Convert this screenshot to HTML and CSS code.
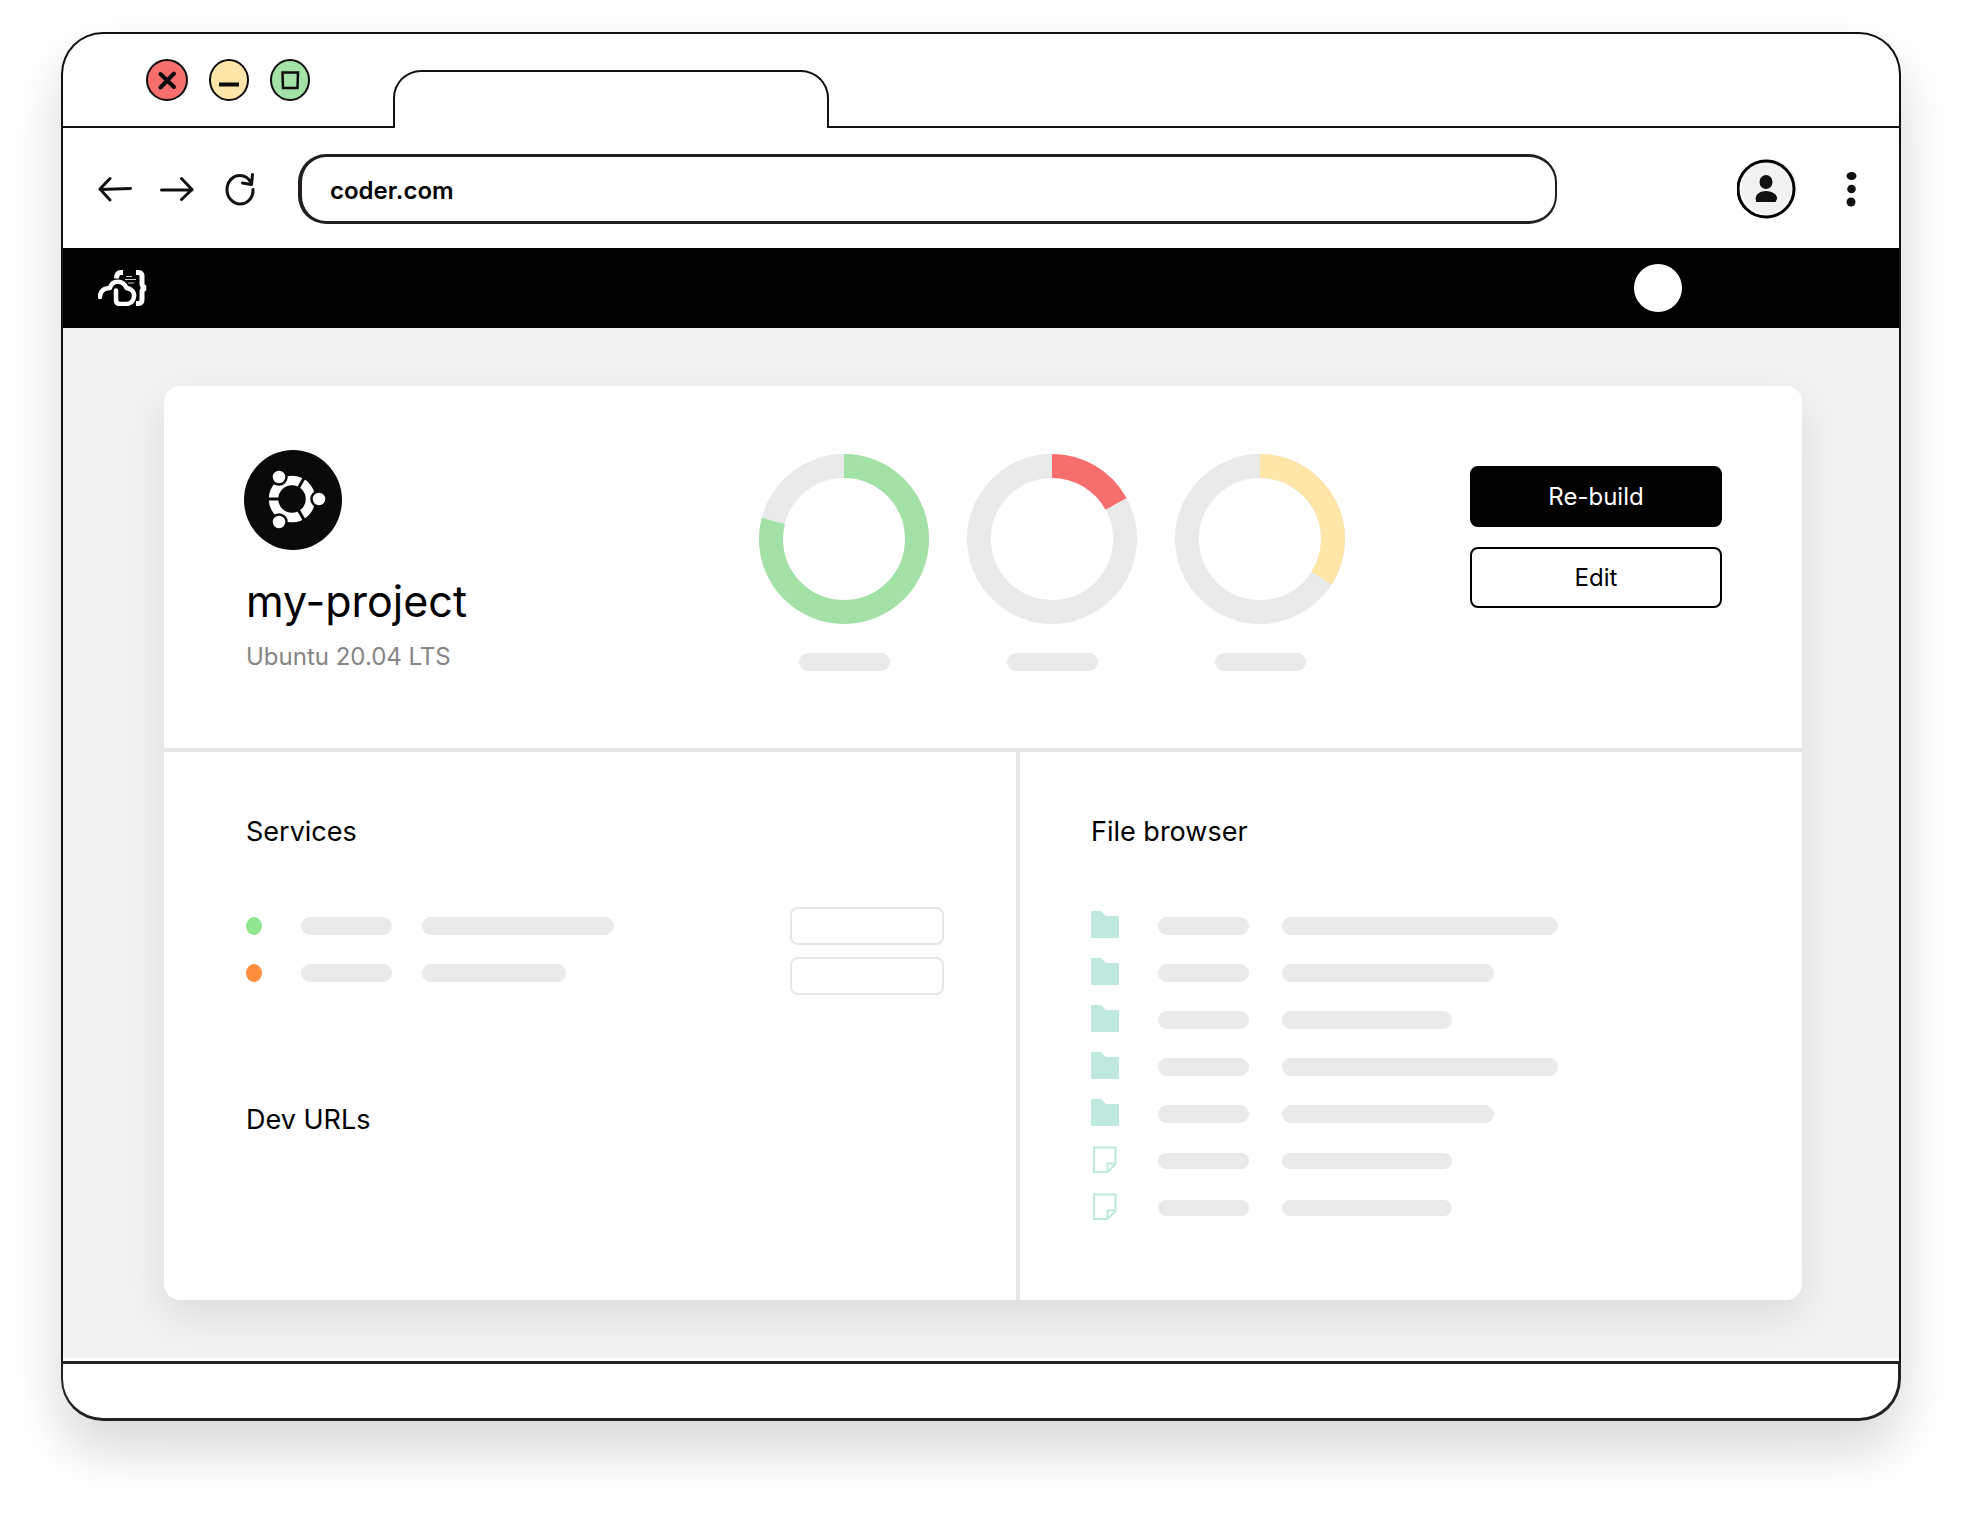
FILE: index.html
```html
<!DOCTYPE html>
<html lang="en">
<head>
  <meta charset="UTF-8" />
  <meta name="viewport" content="width=device-width, initial-scale=1.0" />
  <title>my-project</title>
  <link rel="stylesheet" href="styles.css">
</head>
<body>
  <!-- icons used more than once -->
  <svg class="sprite" aria-hidden="true">
    <symbol id="folder" viewBox="0 0 28 27">
      <path d="M1 0h9l5 5h12q1 0 1 1v20q0 1-1 1H1q-1 0-1-1V1q0-1 1-1z" fill="#bfe8df"/>
    </symbol>
    <symbol id="file" viewBox="0 0 28 27">
      <path d="M3 1.500h21.500v16.500l-8 8H3zM16.500 26v-8.500h8" fill="none" stroke="#bfe8df" stroke-width="2"/>
    </symbol>
  </svg>

  <div class="window">
    <div class="frame">
      <div class="titlebar">
        <div class="controls">
          <button class="control" aria-label="Close">
            <svg width="42" height="42" viewBox="0 0 42 42">
              <ellipse cx="21" cy="21" rx="20" ry="20" fill="#f66e6e" stroke="#0d0d0d" stroke-width="2"/>
              <path d="M14.500 15l13.500 13M28 14.500L14.500 28.500" stroke="#0d0d0d" stroke-width="4" stroke-linecap="round"/>
            </svg>
          </button>
          <button class="control" aria-label="Minimize">
            <svg width="40" height="42" viewBox="0 0 40 42">
              <ellipse cx="20" cy="21" rx="19" ry="20" fill="#ffe5a8" stroke="#0d0d0d" stroke-width="2"/>
              <path d="M10 25.500h20" stroke="#0d0d0d" stroke-width="4"/>
            </svg>
          </button>
          <button class="control" aria-label="Maximize">
            <svg width="40" height="42" viewBox="0 0 40 42">
              <ellipse cx="20" cy="21" rx="19" ry="20" fill="#a3e1a6" stroke="#0d0d0d" stroke-width="2"/>
              <path d="M12.500 13.500h15.500l-.5 15.500H13z" fill="none" stroke="#0d0d0d" stroke-width="2.500"/>
            </svg>
          </button>
        </div>
        <div class="tab"></div>
      </div>

      <div class="toolbar">
        <div class="history">
          <button class="tool" aria-label="Back">
            <svg width="34" height="34" viewBox="0 0 34 34"><path d="M32.500 16.500L2 17.500M12 6.500L2 17l10 11" /></svg>
          </button>
          <button class="tool" aria-label="Forward">
            <svg width="34" height="34" viewBox="0 0 34 34"><path d="M1.500 18H32M21.500 6.500L32 17.500l-10.500 10" /></svg>
          </button>
          <button class="tool" aria-label="Reload">
            <svg width="34" height="34" viewBox="0 0 34 34"><path d="M31 17.500C31.500 26 25 32 18 32S5 25.500 5 18C5 9 11 3.500 18 3.500c5 0 9 3 11.500 8M30.500 2.500l-1 10-9-1.500" /></svg>
          </button>
        </div>
        <input class="address" type="text" value="coder.com" aria-label="Address">
        <div class="menu">
          <button class="tool" aria-label="Profile">
            <svg class="solid" width="60" height="60" viewBox="0 0 60 60">
              <circle cx="32" cy="28" r="28" fill="#f2f2f2"/>
              <circle cx="29" cy="30" r="28" fill="none" stroke="#000" stroke-width="3"/>
              <ellipse cx="29" cy="23" rx="6.500" ry="7" fill="#111"/>
              <path d="M19 42c-2-7 5-10 10-10s12 3 11 8l-1.500 3H19z" fill="#111"/>
            </svg>
          </button>
          <button class="tool" aria-label="Menu">
            <svg class="solid" width="20" height="40" viewBox="0 0 20 40" fill="#111">
              <ellipse cx="10.500" cy="7" rx="5" ry="4"/>
              <circle cx="10.500" cy="20" r="4.300"/>
              <circle cx="10" cy="33" r="4.500"/>
            </svg>
          </button>
        </div>
      </div>

      <header class="navbar">
        <a href="#" aria-label="Home">
          <svg class="logo" width="50" height="36" viewBox="0 0 50 36" fill="none" stroke="#fff">
            <path d="M2 27c0-6 4-9 10-9 2-8 13-8.500 16.500 0 6 1 8 5 7.500 8.500-.5 5-4 7.500-8 7.500h-6q-4 0-4-4v-9.500" stroke-width="4.500" stroke-linecap="round" stroke-linejoin="round"/>
            <path d="M25 2.500h-2q-4.500 0-4.500 6" stroke-width="5"/>
            <path d="M38 2.500h2.500q3.500 0 3.500 4v7q0 4 4 4.500-4 .5-4 4.500v7q0 4-3.500 4H38" stroke-width="5"/>
            <path d="M28 6.500h6M27 9.500h11M30 13h6" stroke-width="1" stroke="#ccc"/>
          </svg>
        </a>
        <button class="avatar" aria-label="Account"></button>
      </header>

      <main class="page">
        <div class="card">
          <section class="summary">
            <div class="project">
              <svg class="distro" width="98" height="100" viewBox="0 0 98 100">
                <ellipse cx="49" cy="50" rx="49" ry="50" fill="#0a0a0a"/>
                <circle cx="48" cy="49" r="18.500" fill="none" stroke="#fff" stroke-width="9.500"/>
                <path d="M48 49H22M48 49l13-22.500M48 49l13 22.500" stroke="#0a0a0a" stroke-width="3"/>
                <circle cx="48" cy="49" r="13" fill="#0a0a0a"/>
                <g fill="#fff" stroke="#0a0a0a" stroke-width="2.500">
                  <circle cx="35" cy="27" r="7.500"/>
                  <circle cx="75" cy="49" r="7.500"/>
                  <circle cx="35" cy="72" r="7.500"/>
                </g>
              </svg>
              <h1>my-project</h1>
              <p class="os">Ubuntu 20.04 LTS</p>
            </div>

            <div class="gauges">
              <div class="gauge green">
                <svg width="172" height="172" viewBox="0 0 172 172">
                  <circle class="track" cx="86" cy="86" r="73"/>
                  <circle class="value" cx="86" cy="86" r="73" pathLength="100" stroke-dasharray="79 21"/>
                </svg>
                <span class="bar label"></span>
              </div>
              <div class="gauge red">
                <svg width="172" height="172" viewBox="0 0 172 172">
                  <circle class="track" cx="86" cy="86" r="73"/>
                  <circle class="value" cx="86" cy="86" r="73" pathLength="100" stroke-dasharray="17 83"/>
                </svg>
                <span class="bar label"></span>
              </div>
              <div class="gauge yellow">
                <svg width="172" height="172" viewBox="0 0 172 172">
                  <circle class="track" cx="86" cy="86" r="73"/>
                  <circle class="value" cx="86" cy="86" r="73" pathLength="100" stroke-dasharray="34 66"/>
                </svg>
                <span class="bar label"></span>
              </div>
            </div>

            <div class="actions">
              <button class="btn btn-primary">Re-build</button>
              <button class="btn">Edit</button>
            </div>
          </section>

          <div class="panels">
            <div class="panel">
              <section>
                <h2>Services</h2>
                <div class="services">
                  <ul class="rows">
                    <li><span class="status up"></span><span class="bar label"></span><span class="bar medium"></span></li>
                    <li><span class="status warn"></span><span class="bar label"></span><span class="bar short"></span></li>
                  </ul>
                  <div class="service-actions">
                    <button class="btn-small" aria-label="Open first service"></button>
                    <button class="btn-small" aria-label="Open second service"></button>
                  </div>
                </div>
              </section>
              <section class="urls">
                <h2>Dev URLs</h2>
              </section>
            </div>

            <section class="panel files">
              <h2>File browser</h2>
              <ul class="rows">
                <li><svg class="icon"><use href="#folder"/></svg><span class="bar label"></span><span class="bar xlong"></span></li>
                <li><svg class="icon"><use href="#folder"/></svg><span class="bar label"></span><span class="bar long"></span></li>
                <li><svg class="icon"><use href="#folder"/></svg><span class="bar label"></span><span class="bar regular"></span></li>
                <li><svg class="icon"><use href="#folder"/></svg><span class="bar label"></span><span class="bar xlong"></span></li>
                <li><svg class="icon"><use href="#folder"/></svg><span class="bar label"></span><span class="bar long"></span></li>
                <li><svg class="icon"><use href="#file"/></svg><span class="bar label slim"></span><span class="bar regular slim"></span></li>
                <li><svg class="icon"><use href="#file"/></svg><span class="bar label slim"></span><span class="bar regular slim"></span></li>
              </ul>
            </section>
          </div>
        </div>
      </main>
    </div>
    <div class="window-foot"></div>
  </div>
</body>
</html>
```

FILE: styles.css
```css
* {
  box-sizing: border-box;
}

body {
  margin: 0;
  padding: 32px 61px 92px;
  background: #fff;
  color: #000;
  font-family: Inter, "Liberation Sans", sans-serif;
}

h1, h2, p, ul {
  margin: 0;
  padding: 0;
  font-weight: 400;
}

ul {
  list-style: none;
}

button {
  padding: 0;
  border: none;
  background: none;
  font-family: inherit;
  cursor: pointer;
}

svg {
  display: block;
}

.sprite {
  display: none;
}

/* Browser window */
.window {
  border-radius: 42px;
  background: #fff;
  box-shadow: 0 28px 56px rgba(0, 0, 0, 0.16);
}

.frame {
  border: 2px solid #111;
  border-bottom: none;
  border-radius: 42px 42px 0 0;
  padding-bottom: 3px;
}

.window-foot {
  height: 60px;
  border: 3px solid #222;
  border-left-width: 2px;
  border-radius: 0 0 42px 42px;
}

.titlebar {
  display: flex;
  align-items: flex-end;
  height: 94px;
  padding-left: 83px;
  border-bottom: 2px solid #111;
}

.controls {
  display: flex;
  align-self: center;
  gap: 21px;
  margin-right: 83px;
}

.tab {
  width: 436px;
  height: 58px;
  margin-bottom: -2px;
  border: 2px solid #111;
  border-bottom: none;
  border-radius: 28px 28px 0 0;
  background: #fff;
}

.toolbar {
  display: flex;
  align-items: center;
  height: 120px;
  padding: 2px 38px 0 35px;
}

.history {
  display: flex;
  gap: 28px;
  margin-right: 42px;
}

.tool svg {
  fill: none;
  stroke: #111;
  stroke-width: 3;
  stroke-linecap: round;
  stroke-linejoin: round;
}

.tool .solid {
  fill: #111;
  stroke: none;
}

.address {
  flex: 1;
  min-width: 0;
  height: 70px;
  margin-right: 180px;
  padding: 2px 28px 0;
  border: 3px solid #231f20;
  border-left-width: 4px;
  border-right-width: 2px;
  border-radius: 28px;
  background: #fff;
  color: #000;
  font-family: inherit;
  font-size: 24px;
  font-weight: 600;
}

.menu {
  display: flex;
  align-items: center;
  gap: 44px;
}

/* Page header */
.navbar {
  display: flex;
  align-items: center;
  justify-content: space-between;
  height: 80px;
  padding: 0 217px 0 35px;
  background: #000;
}

.avatar {
  width: 48px;
  height: 48px;
  border-radius: 50%;
  background: #fff;
}

.page {
  padding: 58px 97px 58px 101px;
  background: #f2f2f2;
}

.card {
  border-radius: 16px;
  background: #fff;
  box-shadow: 0 16px 40px rgba(0, 0, 0, 0.09);
}

/* Project summary */
.summary {
  display: grid;
  grid-template-columns: 1fr auto auto;
  align-items: center;
  gap: 124px;
  padding: 64px 80px 75px;
  border-bottom: 4px solid #e6e6e6;
}

h1 {
  margin-top: 25px;
  padding-left: 2px;
  font-size: 43px;
  line-height: 52px;
}

.os {
  margin-top: 14px;
  padding-left: 2px;
  color: #858585;
  font-size: 24px;
  line-height: 32px;
}

.gauges {
  display: flex;
  gap: 36px;
}

.gauge {
  display: flex;
  flex-direction: column;
  align-items: center;
  gap: 28px;
}

.gauge circle {
  fill: none;
  stroke-width: 24;
}

.gauge .track {
  stroke: #eaeaea;
}

/* start the arc at twelve o'clock */
.gauge .value {
  transform: rotate(-90deg);
  transform-origin: center;
}

.green .value {
  stroke: #a3e1a6;
}

.red .value {
  stroke: #f66e6e;
}

.yellow .value {
  stroke: #ffe5a8;
}

.actions {
  display: flex;
  flex-direction: column;
  align-self: start;
  gap: 20px;
  width: 252px;
  padding-top: 16px;
}

.btn {
  height: 61px;
  border: 2px solid #000;
  border-radius: 8px;
  background: #fff;
  color: #000;
  font-size: 24px;
}

.btn-primary {
  background: #000;
  color: #fff;
}

/* Panels */
.panels {
  display: grid;
  grid-template-columns: 856fr 782fr;
}

.panel {
  padding: 62px 72px 69px 82px;
  border-right: 4px solid #e6e6e6;
}

.files {
  padding-left: 71px;
  border-right: none;
}

h2 {
  margin-bottom: 52px;
  font-size: 27px;
  line-height: 36px;
}

.rows li {
  display: flex;
  align-items: center;
  height: 47px;
}

.bar {
  height: 18px;
  border-radius: 9px;
  background: #eaeaea;
}

.slim {
  height: 16px;
}

.label {
  width: 91px;
}

.rows .label {
  margin-right: 30px;
}

.files .label {
  margin-right: 33px;
}

.short {
  width: 144px;
}

.regular {
  width: 170px;
}

.medium {
  width: 192px;
}

.long {
  width: 212px;
}

.xlong {
  width: 276px;
}

.services {
  display: flex;
  justify-content: space-between;
}

.status {
  width: 16px;
  height: 18px;
  margin-right: 39px;
  border-radius: 50%;
}

.up {
  background: #8fe690;
}

.warn {
  background: #ff8e3c;
}

.service-actions {
  display: flex;
  flex-direction: column;
  gap: 12px;
  padding-top: 5px;
}

.btn-small {
  width: 154px;
  height: 38px;
  border: 2px solid #e6e6e6;
  border-radius: 8px;
}

.urls {
  margin-top: 106px;
}

.icon {
  width: 28px;
  height: 27px;
  margin: 0 39px 3px 0;
}
```
